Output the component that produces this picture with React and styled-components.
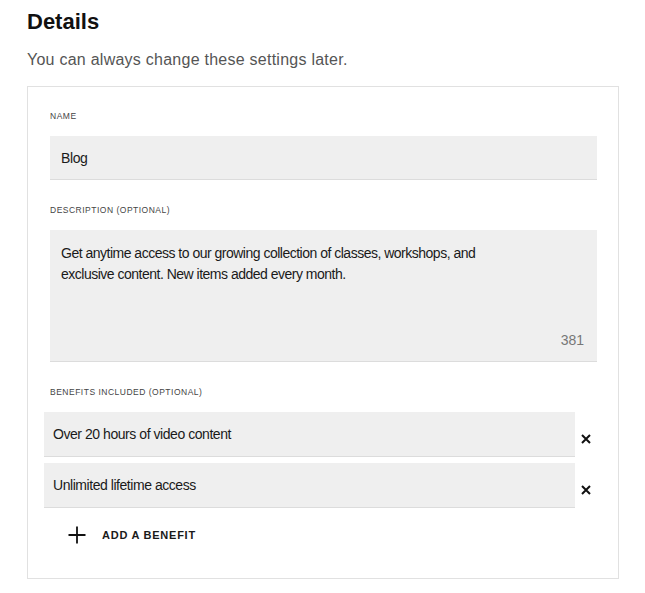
import React from "react";
import styled, { createGlobalStyle } from "styled-components";

const GlobalStyle = createGlobalStyle`
  body {
    margin: 0;
    background: #fff;
    font-family: "Liberation Sans", Arial, sans-serif;
    color: #1a1a1a;
  }
`;

const benefits = ["Over 20 hours of video content", "Unlimited lifetime access"];

function CloseIcon() {
  return (
    <svg width="10" height="10" viewBox="0 0 10 10">
      <path d="M1 1L9 9M9 1L1 9" stroke="#111" strokeWidth="2" />
    </svg>
  );
}

function PlusIcon() {
  return (
    <svg width="18" height="18" viewBox="0 0 18 18">
      <path d="M9 0.5V17.5M0.5 9H17.5" stroke="#111" strokeWidth="1.8" />
    </svg>
  );
}

function App() {
  return (
    <Page>
      <GlobalStyle />
      <Title>Details</Title>
      <Subtitle>You can always change these settings later.</Subtitle>
      <Card>
        <Field>
          <Label>Name</Label>
          <Input>Blog</Input>
        </Field>
        <Field>
          <Label>Description (optional)</Label>
          <TextArea>
            <AreaText>
              Get anytime access to our growing collection of classes,
              workshops, and exclusive content. New items added every month.
            </AreaText>
            <Count>381</Count>
          </TextArea>
        </Field>
        <Field>
          <Label>Benefits included (optional)</Label>
          <BenefitList>
            {benefits.map((b) => (
              <BenefitRow key={b}>
                <BenefitInput>{b}</BenefitInput>
                <RemoveButton aria-label="Remove">
                  <CloseIcon />
                </RemoveButton>
              </BenefitRow>
            ))}
          </BenefitList>
          <AddButton>
            <PlusIcon />
            <span>Add a benefit</span>
          </AddButton>
        </Field>
      </Card>
    </Page>
  );
}

const Page = styled.div`
  padding: 9px 27px 14px;
  width: 592px;
`;

const Title = styled.h1`
  margin: 0;
  font-size: 22px;
  line-height: 26px;
  font-weight: 700;
  color: #111;
`;

const Subtitle = styled.p`
  margin: 15px 0 0;
  font-size: 16px;
  line-height: 20px;
  letter-spacing: 0.25px;
  color: #555;
`;

const Card = styled.div`
  margin-top: 16px;
  border: 1px solid #e1e1e1;
  padding: 23px 21px 31px 22px;
  display: flex;
  flex-direction: column;
  gap: 24px;
`;

const Field = styled.div`
  display: flex;
  flex-direction: column;
`;

const Label = styled.div`
  font-size: 8.5px;
  line-height: 12px;
  letter-spacing: 0.5px;
  text-transform: uppercase;
  color: #444;
  margin-bottom: 14px;
`;

const Input = styled.div`
  box-sizing: border-box;
  height: 44px;
  background: #efefef;
  border-bottom: 1px solid #dcdcdc;
  display: flex;
  align-items: center;
  padding: 0 11px;
  font-size: 14px;
  letter-spacing: -0.4px;
  color: #1a1a1a;
`;

const TextArea = styled.div`
  box-sizing: border-box;
  height: 132px;
  background: #efefef;
  border-bottom: 1px solid #dcdcdc;
  padding: 13px 13px 10px 11px;
  display: flex;
  flex-direction: column;
  font-size: 14px;
  line-height: 21px;
`;

const AreaText = styled.div`
  max-width: 440px;
  letter-spacing: -0.5px;
  color: #1a1a1a;
`;

const Count = styled.div`
  margin-top: auto;
  align-self: flex-end;
  color: #777;
`;

const BenefitList = styled.div`
  display: flex;
  flex-direction: column;
  gap: 6px;
  margin-left: -6px;
`;

const BenefitRow = styled.div`
  display: flex;
  align-items: flex-start;
`;

const BenefitInput = styled.div`
  box-sizing: border-box;
  flex: 1;
  height: 45px;
  background: #efefef;
  border-bottom: 1px solid #dcdcdc;
  display: flex;
  align-items: center;
  padding: 0 9px;
  font-size: 14px;
  letter-spacing: -0.45px;
  color: #1a1a1a;
`;

const RemoveButton = styled.button`
  width: 22px;
  height: 10px;
  margin-top: 22px;
  padding: 0;
  border: none;
  background: none;
  display: flex;
  justify-content: center;
  align-items: center;
  cursor: pointer;
`;

const AddButton = styled.button`
  margin: 15px 0 0 18px;
  height: 24px;
  padding: 0;
  border: none;
  background: none;
  display: flex;
  align-items: center;
  gap: 16px;
  align-self: flex-start;
  font-family: "Liberation Sans", Arial, sans-serif;
  font-size: 11px;
  font-weight: 700;
  letter-spacing: 0.75px;
  text-transform: uppercase;
  color: #1a1a1a;
  cursor: pointer;
`;

export default App;
